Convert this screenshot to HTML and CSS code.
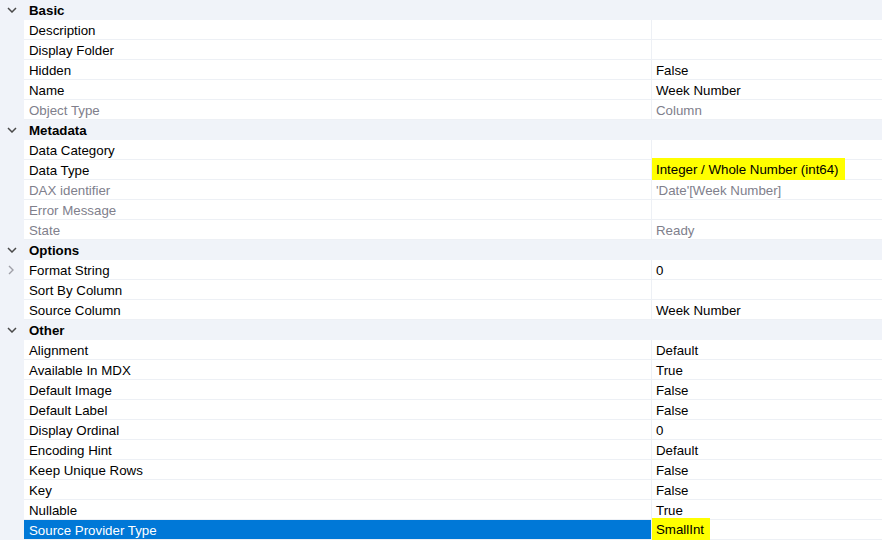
FILE: index.html
```html
<!DOCTYPE html>
<html>
<head>
<meta charset="utf-8">
<link rel="stylesheet" href="styles.css">
</head>
<body>
<div class="grid">
  <div class="cat"><span class="gut"><svg class="chev" viewBox="0 0 10 6"><path d="M1 1 L5 5 L9 1"/></svg></span><span class="catname">Basic</span></div>
  <div class="row"><span class="gut"></span><span class="name">Description</span><span class="val"></span></div>
  <div class="row"><span class="gut"></span><span class="name">Display Folder</span><span class="val"></span></div>
  <div class="row"><span class="gut"></span><span class="name">Hidden</span><span class="val">False</span></div>
  <div class="row"><span class="gut"></span><span class="name">Name</span><span class="val">Week Number</span></div>
  <div class="row dis"><span class="gut"></span><span class="name">Object Type</span><span class="val">Column</span></div>

  <div class="cat"><span class="gut"><svg class="chev" viewBox="0 0 10 6"><path d="M1 1 L5 5 L9 1"/></svg></span><span class="catname">Metadata</span></div>
  <div class="row"><span class="gut"></span><span class="name">Data Category</span><span class="val"></span></div>
  <div class="row"><span class="gut"></span><span class="name">Data Type</span><span class="val"><span class="hl">Integer / Whole Number (int64)</span></span></div>
  <div class="row dis"><span class="gut"></span><span class="name">DAX identifier</span><span class="val">'Date'[Week Number]</span></div>
  <div class="row dis"><span class="gut"></span><span class="name">Error Message</span><span class="val"></span></div>
  <div class="row dis"><span class="gut"></span><span class="name">State</span><span class="val">Ready</span></div>

  <div class="cat"><span class="gut"><svg class="chev" viewBox="0 0 10 6"><path d="M1 1 L5 5 L9 1"/></svg></span><span class="catname">Options</span></div>
  <div class="row"><span class="gut"><svg class="chevr" viewBox="0 0 6 10"><path d="M1 1 L5 5 L1 9"/></svg></span><span class="name">Format String</span><span class="val">0</span></div>
  <div class="row"><span class="gut"></span><span class="name">Sort By Column</span><span class="val"></span></div>
  <div class="row"><span class="gut"></span><span class="name">Source Column</span><span class="val">Week Number</span></div>

  <div class="cat"><span class="gut"><svg class="chev" viewBox="0 0 10 6"><path d="M1 1 L5 5 L9 1"/></svg></span><span class="catname">Other</span></div>
  <div class="row"><span class="gut"></span><span class="name">Alignment</span><span class="val">Default</span></div>
  <div class="row"><span class="gut"></span><span class="name">Available In MDX</span><span class="val">True</span></div>
  <div class="row"><span class="gut"></span><span class="name">Default Image</span><span class="val">False</span></div>
  <div class="row"><span class="gut"></span><span class="name">Default Label</span><span class="val">False</span></div>
  <div class="row"><span class="gut"></span><span class="name">Display Ordinal</span><span class="val">0</span></div>
  <div class="row"><span class="gut"></span><span class="name">Encoding Hint</span><span class="val">Default</span></div>
  <div class="row"><span class="gut"></span><span class="name">Keep Unique Rows</span><span class="val">False</span></div>
  <div class="row"><span class="gut"></span><span class="name">Key</span><span class="val">False</span></div>
  <div class="row"><span class="gut"></span><span class="name">Nullable</span><span class="val">True</span></div>
  <div class="row sel"><span class="gut"></span><span class="name">Source Provider Type</span><span class="val"><span class="hl">SmallInt</span></span></div>
</div>
</body>
</html>
```
FILE: styles.css
```css
html, body {
  margin: 0;
  padding: 0;
  background: #ffffff;
}
.grid {
  width: 882px;
  font-family: "Liberation Sans", Arial, sans-serif;
  font-size: 13.3px;
  color: #000000;
  display: flex;
  flex-direction: column;
}
.cat, .row {
  display: flex;
  height: 20px;
  box-sizing: border-box;
}
.cat {
  background: #f0f3f9;
}
.gut {
  width: 24px;
  flex: none;
  background: #f0f3f9;
  display: flex;
  align-items: center;
  justify-content: center;
}
.chev {
  width: 10px;
  height: 6px;
  margin-left: 0;
  fill: none;
  stroke: #4a4a4a;
  stroke-width: 1.5;
}
.chevr {
  width: 6px;
  height: 10px;
  margin-left: -2px;
  fill: none;
  stroke: #a0a0a8;
  stroke-width: 1.4;
}
.catname {
  font-weight: bold;
  padding-left: 5px;
  line-height: 21px;
}
.name {
  width: 627px;
  flex: none;
  padding-left: 5px;
  padding-top: 1px;
  box-sizing: border-box;
  line-height: 19px;
  border-bottom: 1px solid #edf0f5;
  white-space: nowrap;
}
.val {
  flex: 1;
  border-left: 1px solid #edf0f5;
  border-bottom: 1px solid #edf0f5;
  padding-left: 4px;
  padding-top: 1px;
  line-height: 19px;
  white-space: nowrap;
}
.dis .name, .dis .val {
  color: #80808c;
}
.sel .name {
  background: #0078d7;
  color: #ffffff;
}
.hl {
  display: inline-block;
  background: #ffff00;
  margin-left: -4px;
  padding: 2px 6px 0 4px;
  margin-top: -3px;
  line-height: 20px;
  vertical-align: top;
}
```
